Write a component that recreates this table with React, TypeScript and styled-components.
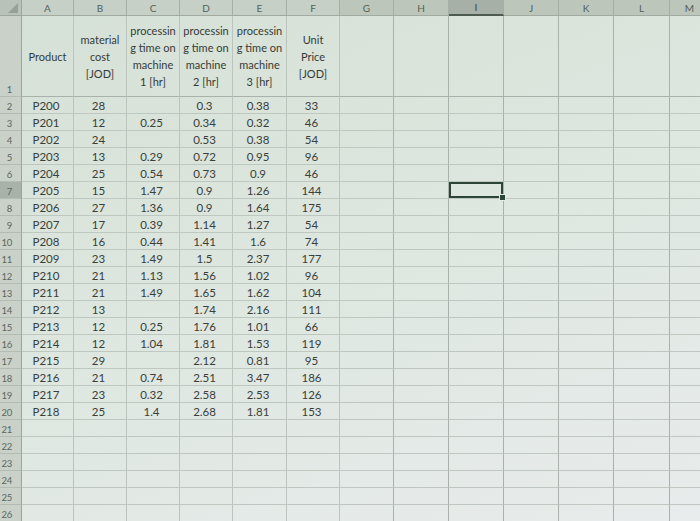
import React from "react";
import styled, { createGlobalStyle, css } from "styled-components";

const GlobalStyle = createGlobalStyle`
  html, body {
    margin: 0;
    padding: 0;
    width: 700px;
    height: 521px;
    overflow: hidden;
    background: #e2e8e3;
  }
  body {
    font-family: Lato, "Open Sans", "Liberation Sans", sans-serif;
  }
`;

const COLS = ["A", "B", "C", "D", "E", "F", "G", "H", "I", "J", "K", "L", "M"];
const WIDTHS = [52, 53, 53, 53, 54, 53, 54, 55, 55, 55, 55, 56, 40];

const rows: string[][] = [
  ["P200", "28", "", "0.3", "0.38", "33"],
  ["P201", "12", "0.25", "0.34", "0.32", "46"],
  ["P202", "24", "", "0.53", "0.38", "54"],
  ["P203", "13", "0.29", "0.72", "0.95", "96"],
  ["P204", "25", "0.54", "0.73", "0.9", "46"],
  ["P205", "15", "1.47", "0.9", "1.26", "144"],
  ["P206", "27", "1.36", "0.9", "1.64", "175"],
  ["P207", "17", "0.39", "1.14", "1.27", "54"],
  ["P208", "16", "0.44", "1.41", "1.6", "74"],
  ["P209", "23", "1.49", "1.5", "2.37", "177"],
  ["P210", "21", "1.13", "1.56", "1.02", "96"],
  ["P211", "21", "1.49", "1.65", "1.62", "104"],
  ["P212", "13", "", "1.74", "2.16", "111"],
  ["P213", "12", "0.25", "1.76", "1.01", "66"],
  ["P214", "12", "1.04", "1.81", "1.53", "119"],
  ["P215", "29", "", "2.12", "0.81", "95"],
  ["P216", "21", "0.74", "2.51", "3.47", "186"],
  ["P217", "23", "0.32", "2.58", "2.53", "126"],
  ["P218", "25", "1.4", "2.68", "1.81", "153"],
];

const headers: string[][] = [
  ["Product"],
  ["material", "cost", "[JOD]"],
  ["processin", "g time on", "machine", "1 [hr]"],
  ["processin", "g time on", "machine", "2 [hr]"],
  ["processin", "g time on", "machine", "3 [hr]"],
  ["Unit", "Price", "[JOD]"],
];

const EXTRA_ROWS = 7;
const SEL_ROW = 7;
const SEL_COL = 8; // I

const Sheet = styled.div`
  display: grid;
  grid-template-columns: 22px ${WIDTHS.map((w) => `${w}px`).join(" ")};
  grid-template-rows: 16px 81px repeat(${rows.length + EXTRA_ROWS}, 17px);
  width: 700px;
  height: 521px;
  overflow: hidden;
  background: linear-gradient(160deg, #d5e0d6 0%, #dbe5dc 35%, #e2e9e5 70%, #e8ecec 100%);
  color: #39403b;
`;

const Corner = styled.div`
  position: relative;
  background: #b9c2b9;
  border-right: 1px solid #9ea79f;
  border-bottom: 1px solid #9ea79f;
  &::after {
    content: "";
    position: absolute;
    right: 3px;
    bottom: 2px;
    width: 0;
    height: 0;
    border-left: 10px solid transparent;
    border-bottom: 10px solid #98a198;
  }
`;

const ColHead = styled.div<{ $active?: boolean; $far?: boolean }>`
  display: flex;
  align-items: center;
  justify-content: center;
  font-size: 10px;
  color: #556057;
  background: ${(p) => (p.$far ? "#bcc6bb" : "#c7d0c7")};
  border-right: 1px solid #a6afa6;
  border-bottom: 1px solid #a0aaa1;
  ${(p) =>
    p.$active &&
    css`
      background: #a7b0a7;
      color: #3c443e;
      border-bottom: 2px solid #4d5a50;
    `}
`;

const RowHead = styled.div<{ $active?: boolean }>`
  display: flex;
  align-items: flex-end;
  justify-content: flex-end;
  padding: 0 9px 1px 0;
  font-size: 9.5px;
  letter-spacing: -0.3px;
  color: #5c665e;
  background: ${(p) => (p.$active ? "#a9b2a9" : "#c9d1c9")};
  border-right: 1px solid #9aa49b;
  border-bottom: 1px solid #b3bcb3;
  box-sizing: border-box;
`;

const Cell = styled.div<{ $head?: boolean; $selected?: boolean; $dim?: boolean }>`
  position: relative;
  display: flex;
  align-items: center;
  justify-content: center;
  font-size: 11.5px;
  padding-right: 3px;
  white-space: nowrap;
  border-right: 1px solid ${(p) => (p.$dim ? "#a9b2aa" : "#bcc5bd")};
  border-bottom: 1px solid #bfc8c0;
  box-sizing: border-box;
  ${(p) =>
    p.$head &&
    css`
      flex-direction: column;
      padding-right: 0;
      font-size: 11px;
      line-height: 17px;
      text-align: center;
      color: #353b37;
      border-bottom-color: #a9b2aa;
    `}
  ${(p) =>
    p.$selected &&
    css`
      box-shadow: inset 0 0 0 2px #2c4535;
      &::after {
        content: "";
        position: absolute;
        right: -3px;
        bottom: -3px;
        width: 5px;
        height: 5px;
        background: #2c4535;
        border: 1px solid #e4ebe6;
        z-index: 2;
      }
    `}
`;

const HeadLine = styled.span`
  display: block;
`;

export default function App() {
  const totalRows = 1 + rows.length + EXTRA_ROWS;
  const cells: React.ReactNode[] = [];

  cells.push(<Corner key="corner" />);
  COLS.forEach((c, i) => {
    cells.push(
      <ColHead key={`ch-${c}`} $active={i === SEL_COL} $far={i >= 6}>
        {c}
      </ColHead>
    );
  });

  for (let r = 1; r <= totalRows; r++) {
    cells.push(
      <RowHead key={`rh-${r}`} $active={r === SEL_ROW}>
        {r < totalRows ? r : ""}
      </RowHead>
    );
    COLS.forEach((c, ci) => {
      const key = `${c}${r}`;
      const dim = ci >= 6;
      if (r === 1) {
        const lines = headers[ci];
        cells.push(
          <Cell key={key} $head $dim={dim}>
            {lines &&
              lines.map((l, li) => <HeadLine key={li}>{l}</HeadLine>)}
          </Cell>
        );
        return;
      }
      const data = rows[r - 2];
      const value = data && ci < 6 ? data[ci] : "";
      cells.push(
        <Cell key={key} $dim={dim} $selected={r === SEL_ROW && ci === SEL_COL}>
          {value}
        </Cell>
      );
    });
  }

  return (
    <>
      <GlobalStyle />
      <Sheet>{cells}</Sheet>
    </>
  );
}
